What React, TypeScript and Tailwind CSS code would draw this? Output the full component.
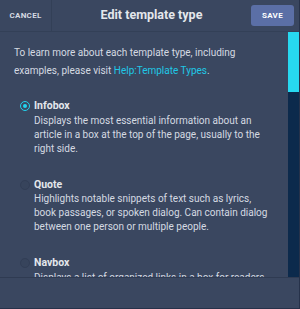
import { useState } from "react";

interface TemplateType {
  id: string;
  label: string;
  description: string;
}

const templateTypes: TemplateType[] = [
  {
    id: "infobox",
    label: "Infobox",
    description:
      "Displays the most essential information about an article in a box at the top of the page, usually to the right side.",
  },
  {
    id: "quote",
    label: "Quote",
    description:
      "Highlights notable snippets of text such as lyrics, book passages, or spoken dialog. Can contain dialog between one person or multiple people.",
  },
  {
    id: "navbox",
    label: "Navbox",
    description:
      "Displays a list of organized links in a box for readers to navigate between related articles.",
  },
];

export default function App() {
  const [selected, setSelected] = useState("infobox");

  return (
    <div
      className="flex h-[309px] w-[300px] flex-col overflow-hidden border-r border-b border-[#27324a] bg-[#3a4760] text-[#d5dae2]"
      style={{ fontFamily: "Roboto, 'Liberation Sans', sans-serif" }}
    >
      {/* header */}
      <div className="flex h-[32px] shrink-0 items-center border-b border-[#334057]">
        <button className="flex h-full w-[52px] items-center justify-center border-r border-[#334057] text-[8px] font-bold tracking-[0.3px] text-[#d5dae2]">
          CANCEL
        </button>
        <div className="flex-1 text-center text-[12.5px] font-bold text-[#e4e7ec]">Edit template type</div>
        <button className="mr-[5px] flex h-[21px] w-[43px] items-center justify-center rounded-[3px] bg-[#5b6fa6] text-[8px] font-bold tracking-[0.3px] text-white">
          SAVE
        </button>
      </div>

      {/* body */}
      <div className="flex min-h-0 flex-1">
        <div className="flex-1 overflow-hidden pt-[12px] pl-[14px] pr-[13px] text-[10px]">
          <p className="leading-[18px]">
            To learn more about each template type, including examples, please visit{" "}
            <a className="text-[#1fc7e6]">Help:Template Types</a>.
          </p>
          <div className="mt-[19px] flex flex-col gap-[22px]">
            {templateTypes.map((t) => (
              <label key={t.id} className="flex cursor-pointer gap-[4px] pl-[6px]" onClick={() => setSelected(t.id)}>
                <span className="mt-[2px] flex h-[10px] w-[10px] shrink-0 items-center justify-center">
                  {selected === t.id ? (
                    <span className="flex h-[10px] w-[10px] items-center justify-center rounded-full border-[1.5px] border-[#22d3ee]">
                      <span className="h-[4px] w-[4px] rounded-full bg-[#22d3ee]" />
                    </span>
                  ) : (
                    <span className="h-[10px] w-[10px] rounded-full border border-[#323e56] bg-[#37445c]" />
                  )}
                </span>
                <span className="flex flex-col">
                  <span className="text-[10.5px] leading-[14.5px] font-bold text-[#e4e7ec]">{t.label}</span>
                  <span className="leading-[14px]">{t.description}</span>
                </span>
              </label>
            ))}
          </div>
        </div>
        <div className="w-[11px] shrink-0 bg-[#0c2a4c]">
          <div className="h-[60px] bg-[#27d8f0]" />
        </div>
      </div>

      {/* footer */}
      <div className="h-[31px] shrink-0 border-t border-[#2f3b52] bg-[#3a4760]" />
    </div>
  );
}
